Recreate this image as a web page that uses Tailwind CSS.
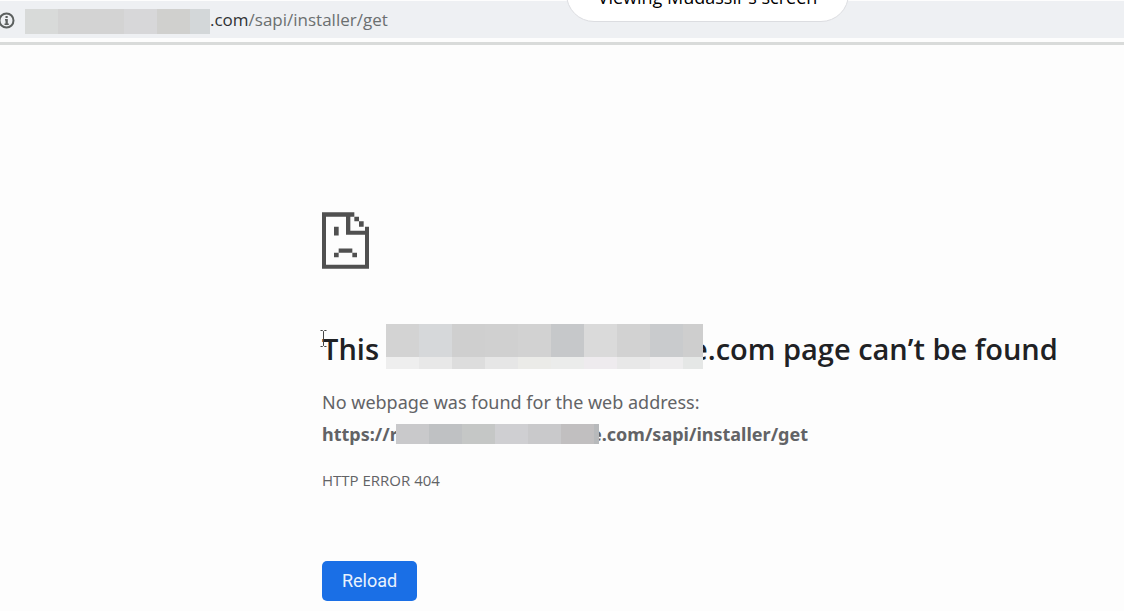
<!DOCTYPE html>
<html lang="en">
<head>
    <meta charset="UTF-8">
    <meta name="viewport" content="width=device-width, initial-scale=1.0">
    <title>Page not found</title>
    <script src="https://cdn.jsdelivr.net/npm/@tailwindcss/browser@4"></script>
</head>
<body class="relative min-h-screen overflow-hidden bg-[#fdfdfd] font-['Open_Sans','Noto_Sans',sans-serif] text-[#626366]">
    <!-- address bar -->
    <header class="border-b-3 border-[#d9dbda] bg-[#fdfdfd] pt-px pb-1">
        <div class="flex h-[37px] items-center bg-[#eef0f3] pt-px text-[17px]">
            <svg class="-ml-0.5 h-[17px] w-[17px] shrink-0" viewBox="0 0 17 17" fill="none" aria-hidden="true">
                <circle cx="8.5" cy="8.5" r="7" stroke="#5c605f" stroke-width="2"/>
                <path d="M7 7h2.8v4.5h1V13H6.5v-1.5h1V8.5H7zM7.500 4h2.200v2H7.500z" fill="#5c605f"/>
            </svg>
            <span class="mt-0.5 ml-2.5 flex h-[25px] w-[185px] shrink-0">
                <span class="w-[33px] bg-[#d8dad9]"></span>
                <span class="w-[66px] bg-[#d3d3d3]"></span>
                <span class="w-[33px] bg-[#d7d7d9]"></span>
                <span class="w-[33px] bg-[#d0d0ce]"></span>
                <span class="w-5 bg-[#d3d7d9]"></span>
            </span>
            <span class="whitespace-nowrap text-[#6b6f70]"><span class="text-[#303234]">.com</span>/sapi/installer/get</span>
        </div>
    </header>

    <!-- screen share label -->
    <div class="absolute -top-7 left-[566px] flex h-[50px] w-[283px] items-center justify-center rounded-b-[28px] border border-[#dcdde1] bg-white text-lg whitespace-nowrap text-black">Viewing Mudassir's screen</div>

    <main class="ml-[322px] pt-[167px]">
        <svg class="h-[57px] w-[47px]" viewBox="0 0 141 170" fill="#505050" aria-hidden="true">
            <path d="M0 0H97V14H85V56H129V44H141V170H0ZM12 14V158H129V68H72V14Z" fill-rule="evenodd"/>
            <path d="M97 14h14v13H97zM111 27h14v17h-14zM36 44h14v26H36zM50 109h41v13H50zM36 122h14v13H36zM91 122h14v13H91z"/>
        </svg>

        <h1 class="mt-[55px] flex h-[45px] items-center text-[29px] font-semibold whitespace-nowrap text-[#202124]">
            <span class="w-16 pt-1">This</span>
            <span class="relative z-10 -mr-3 grid h-[45px] w-[317px] shrink-0 grid-cols-[repeat(9,33px)_20px] grid-rows-[33px_12px]">
                <span class="bg-[#d3d3d3]"></span>
                <span class="bg-[#d6d8da]"></span>
                <span class="bg-[#cfcfcf]"></span>
                <span class="bg-[#d0d0d0]"></span>
                <span class="bg-[#d2d2d2]"></span>
                <span class="bg-[#c6c8ca]"></span>
                <span class="bg-[#dadada]"></span>
                <span class="bg-[#d2d2d2]"></span>
                <span class="bg-[#c9cbcd]"></span>
                <span class="bg-[#cecece]"></span>
                <span class="bg-[#eeeeee]"></span>
                <span class="bg-[#e8e8e8]"></span>
                <span class="bg-[#dddddd]"></span>
                <span class="bg-[#e6e6e6]"></span>
                <span class="bg-[#ebebe8]"></span>
                <span class="bg-[#ebeceb]"></span>
                <span class="bg-[#eeebee]"></span>
                <span class="bg-[#e8e8e8]"></span>
                <span class="bg-[#eeedee]"></span>
                <span class="bg-[#e5e7e6]"></span>
            </span>
            <span class="pt-1">e.com page can’t be found</span>
        </h1>

        <p class="mt-[18px] font-['Noto_Sans',sans-serif] text-lg leading-[31px] whitespace-nowrap">No webpage was found for the web address:</p>
        <p class="flex h-[31px] items-center font-['Noto_Sans',sans-serif] text-lg font-bold whitespace-nowrap">
            <span class="w-[74px]">https://r</span>
            <span class="relative z-10 -mr-2 flex h-5 w-[203px] shrink-0">
                <span class="w-[33px] bg-[#c9c9cb]"></span>
                <span class="w-[33px] bg-[#bfc1c3]"></span>
                <span class="w-[33px] bg-[#c5c7c6]"></span>
                <span class="w-[33px] bg-[#cfcfd2]"></span>
                <span class="w-[33px] bg-[#c9c9cb]"></span>
                <span class="w-[33px] bg-[#c1bfc0]"></span>
                <span class="w-[5px] bg-[#b7b9bb]"></span>
            </span>
            <span>e.com/sapi/installer/get</span>
        </p>
        <p class="mt-[18px] text-[15px] leading-[26px]">HTTP ERROR 404</p>

        <button type="button" class="mt-[68px] h-10 w-[95px] rounded-[5px] bg-[#1a6fe6] font-['Roboto',sans-serif] text-lg text-[#e9f2fd]">Reload</button>
    </main>

    <!-- text cursor -->
    <svg class="absolute top-[330px] left-[320px] h-[17px] w-2" viewBox="0 0 8 17" fill="none" stroke="#444" aria-hidden="true">
        <path d="M.5.5h2l1 1 1-1h2M3.5 1.5v14M.5 16.5h2l1-1 1 1h2"/>
    </svg>
</body>
</html>
